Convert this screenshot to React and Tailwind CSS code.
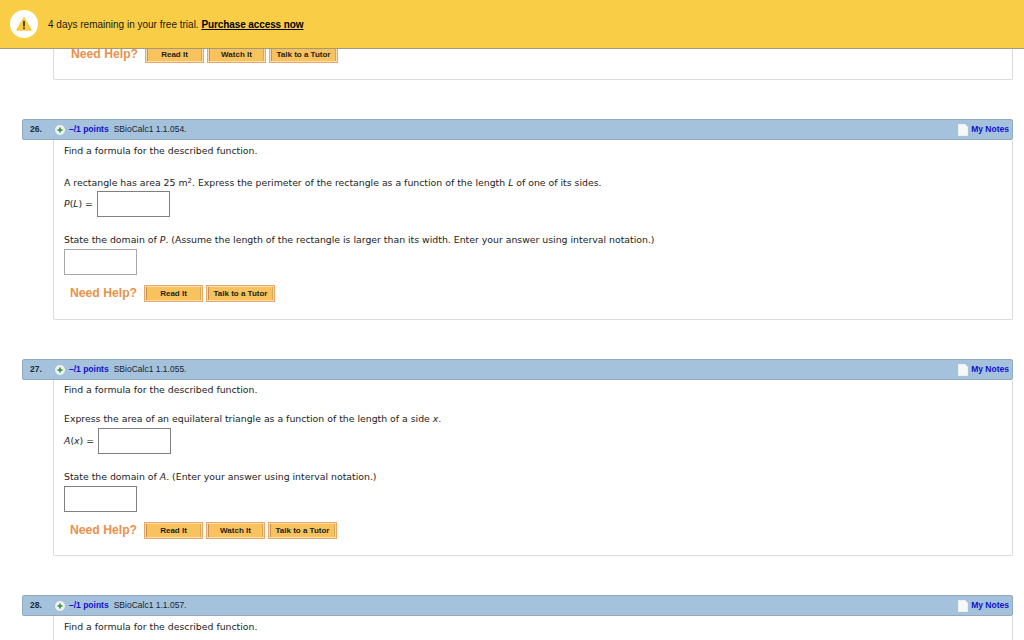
import React from "react";

const TutorButton = ({ label, width }) => (
  <div className={`${width} h-[17px] flex items-center justify-center bg-[#f8c25c] border border-[#eaa765] shadow-[inset_0_0_0_1px_#f6dcb0,inset_2px_0_0_0_#c4935a,inset_-2px_0_0_0_#d9a45c] font-['Liberation_Sans',sans-serif] text-[8px] font-bold text-[#1f1f1f]`}>
    {label}
  </div>
);

const NeedHelp = ({ buttons }) => (
  <div className="flex items-center h-[17px] pl-[6px]">
    <span className="w-[74px] font-['Liberation_Sans',sans-serif] text-[12.2px] font-bold text-[#e8924a] leading-none">Need Help?</span>
    <div className="flex gap-[3px]">
      {buttons.includes("read") && <TutorButton label="Read It" width="w-[59px]" />}
      {buttons.includes("watch") && <TutorButton label="Watch It" width="w-[59px]" />}
      <TutorButton label="Talk to a Tutor" width="w-[69px]" />
    </div>
  </div>
);

const QuestionHeader = ({ num, code }) => (
  <div className="h-[21px] ml-[22px] flex items-center bg-[#a4c2dc] border border-[#94a9ba] rounded-[2px] font-['Liberation_Sans',sans-serif] text-[8.5px]">
    <span className="w-[32px] pl-[7px] font-bold text-[#1a2a3a]">{num}.</span>
    <svg width="10" height="10" viewBox="0 0 10 10">
      <circle cx="5" cy="5" r="5" fill="#eef1ee" />
      <path d="M5 2.5V7.5M2.5 5H7.5" stroke="#2f8f3a" strokeWidth="1.5" />
    </svg>
    <span className="ml-[4px] font-bold text-[#1111cc]">–/1 points</span>
    <span className="ml-[5px] text-[#1a2530]">SBioCalc1 1.1.{code}.</span>
    <div className="ml-auto mr-[3px] flex items-center gap-[3px]">
      <svg width="10" height="12" viewBox="0 0 10 12">
        <path d="M0 0H7L10 3V12H0Z" fill="#f7f8f8" stroke="#cfd6dc" strokeWidth="0.5" />
      </svg>
      <span className="font-bold text-[#1111cc]">My Notes</span>
    </div>
  </div>
);

const Prompt = ({ children, className = "" }) => (
  <p className={`h-[12px] leading-[12px] font-['DejaVu_Sans',sans-serif] text-[9.33px] text-[#222] whitespace-nowrap ${className}`}>
    {children}
  </p>
);

const AnswerBox = ({ dark }) => (
  <div className={`w-[73px] h-[26px] bg-white border ${dark ? "border-[#808080]" : "border-[#a8a8a8]"}`} />
);

export default function App() {
  return (
    <div className="relative h-[640px] w-[1024px] overflow-hidden bg-white">
      {/* Trial banner sits over the scrolled page */}
      <div className="absolute top-0 left-0 right-0 z-10 h-[49px] flex items-center bg-[#f9cd45] border-b border-[#a39a7d] pl-[10px]">
        <div className="w-[28px] h-[28px] rounded-full bg-white flex items-center justify-center">
          <svg width="16" height="14" viewBox="0 0 16 14">
            <path d="M8 1L15 13H1Z" fill="#f9cd45" stroke="#f9cd45" strokeWidth="1.5" strokeLinejoin="round" />
            <rect x="7.2" y="4" width="1.6" height="5.5" fill="#2a2618" />
            <rect x="7.2" y="10.5" width="1.6" height="1.6" fill="#2a2618" />
          </svg>
        </div>
        <span className="ml-[10px] font-['Liberation_Sans',sans-serif] text-[10px] text-[#1c1a10]">
          4 days remaining in your free trial.{" "}
          <span className="font-bold underline text-black tracking-[-0.1px]">Purchase access now</span>
        </span>
      </div>

      {/* End of question 25 */}
      <div className="mt-[46px] ml-[53px] w-[960px] h-[34px] px-[11px] border-l border-r border-b border-[#dcdcdc] rounded-b-[2px]">
        <NeedHelp buttons={["read", "watch"]} />
      </div>

      {/* Question 26 */}
      <div className="mt-[39px] w-[1013px]">
        <QuestionHeader num="26" code="054" />
        <div className="ml-[53px] h-[180px] px-[10px] pt-[5px] border-l border-r border-b border-[#dcdcdc] rounded-b-[2px]">
          <Prompt>Find a formula for the described function.</Prompt>
          <Prompt className="mt-[20px]">
            A rectangle has area 25 m<sup className="text-[7px] leading-none">2</sup>. Express the perimeter of the rectangle as a function of the length <i>L</i> of one of its sides.
          </Prompt>
          <div className="mt-[2px] flex items-center gap-[4px]">
            <Prompt><i>P</i>(<i>L</i>) =</Prompt>
            <AnswerBox dark />
          </div>
          <Prompt className="mt-[17px]">
            State the domain of <i>P</i>. (Assume the length of the rectangle is larger than its width. Enter your answer using interval notation.)
          </Prompt>
          <div className="mt-[3px]"><AnswerBox /></div>
          <div className="mt-[10px]"><NeedHelp buttons={["read"]} /></div>
        </div>
      </div>

      {/* Question 27 */}
      <div className="mt-[39px] w-[1013px]">
        <QuestionHeader num="27" code="055" />
        <div className="ml-[53px] h-[176px] px-[10px] pt-[4px] border-l border-r border-b border-[#dcdcdc] rounded-b-[2px]">
          <Prompt>Find a formula for the described function.</Prompt>
          <Prompt className="mt-[17px]">
            Express the area of an equilateral triangle as a function of the length of a side <i>x</i>.
          </Prompt>
          <div className="mt-[3px] flex items-center gap-[4px]">
            <Prompt><i>A</i>(<i>x</i>) =</Prompt>
            <AnswerBox dark />
          </div>
          <Prompt className="mt-[17px]">
            State the domain of <i>A</i>. (Enter your answer using interval notation.)
          </Prompt>
          <div className="mt-[3px]"><AnswerBox dark /></div>
          <div className="mt-[10px]"><NeedHelp buttons={["read", "watch"]} /></div>
        </div>
      </div>

      {/* Question 28 */}
      <div className="mt-[39px] w-[1013px]">
        <QuestionHeader num="28" code="057" />
        <div className="ml-[53px] h-[40px] px-[10px] pt-[5px] border-l border-r border-[#dcdcdc]">
          <Prompt>Find a formula for the described function.</Prompt>
        </div>
      </div>
    </div>
  );
}
